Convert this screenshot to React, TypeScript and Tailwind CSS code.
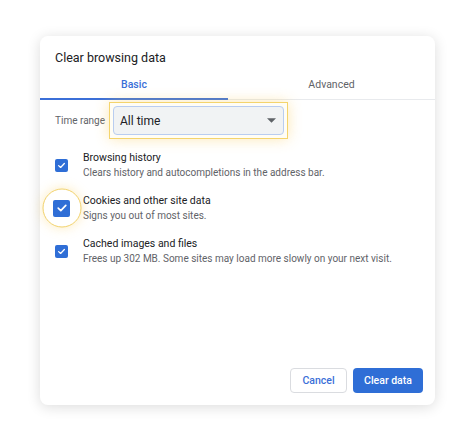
import React from 'react';

const items = [
  { title: 'Browsing history', sub: 'Clears history and autocompletions in the address bar.', focus: false },
  { title: 'Cookies and other site data', sub: 'Signs you out of most sites.', focus: true },
  { title: 'Cached images and files', sub: 'Frees up 302 MB. Some sites may load more slowly on your next visit.', focus: false },
];

const Check: React.FC<{ big?: boolean }> = ({ big }) => (
  <div
    className={`${big ? 'w-[17px] h-[17px]' : 'w-[13px] h-[13px]'} shrink-0 rounded-[2px] bg-[#2f6ed6] flex items-center justify-center relative z-10`}
  >
    <svg viewBox="0 0 12 12" className={big ? 'w-[12px] h-[12px]' : 'w-[9px] h-[9px]'}>
      <path d="M2.2 6.2 L4.8 8.6 L9.8 3.4" fill="none" stroke="white" strokeWidth="1.7" strokeLinecap="round" strokeLinejoin="round" />
    </svg>
  </div>
);

export default function App() {
  return (
    <div className="w-[474px] h-[443px] bg-white pt-[36px] pl-[40px] font-['Roboto',sans-serif]">
      <div className="w-[395px] h-[369px] rounded-lg bg-white shadow-[0_2px_14px_rgba(0,0,0,0.14)] flex flex-col">
        <div className="h-[42px] pt-[14px] px-[15px] text-[12.5px] leading-[15px] text-[#202124]">Clear browsing data</div>

        <div className="flex h-[22px] border-b border-[#e8eaed]">
          <div className="w-[188px] border-b-2 border-[#3b6fd8] -mb-px text-center text-[10.5px] leading-[12px] font-medium text-[#3b6fd8] pt-px">Basic</div>
          <div className="flex-1 text-center text-[10.5px] leading-[12px] text-[#5f6368] pt-px">Advanced</div>
        </div>

        <div className="flex items-center mt-[2px] pl-[15px]">
          <span className="w-[54px] text-[10px] text-[#5f6368]">Time range</span>
          <div className="p-[3px] border-[1.5px] border-[#f4d46c] bg-[#fffdf5] shadow-[0_0_14px_rgba(250,205,90,0.45)]">
            <div className="w-[171px] h-[29px] rounded-[4px] bg-[#f1f3f4] border border-[#b9cdf0] flex items-center justify-between pl-[6px] pr-[7px]">
              <span className="text-[12px] text-[#202124]">All time</span>
              <svg viewBox="0 0 10 5" className="w-[9px] h-[5px]">
                <path d="M0 0 L10 0 L5 5 Z" fill="#5f6368" />
              </svg>
            </div>
          </div>
        </div>

        <div className="flex flex-col gap-[13px] mt-[11px] pl-[15px]">
          {items.map(it => (
            <div key={it.title} className="flex items-center h-[30px]">
              <div className="w-[13px] flex justify-center relative">
                {it.focus && (
                  <div className="absolute left-1/2 top-1/2 -translate-x-1/2 -translate-y-1/2 w-[39px] h-[39px] rounded-full border-[1.5px] border-[#f2d36e] bg-white shadow-[0_0_12px_rgba(250,205,90,0.4)]" />
                )}
                <Check big={it.focus} />
              </div>
              <div className="ml-[15px] flex flex-col">
                <span className="text-[10.5px] leading-[15px] text-[#202124]">{it.title}</span>
                <span className="text-[10px] leading-[15px] text-[#5f6368]">{it.sub}</span>
              </div>
            </div>
          ))}
        </div>

        <div className="mt-auto flex justify-end gap-[6px] pr-[12px] pb-[12px]">
          <button className="w-[57px] h-[25px] rounded-[4px] border border-[#dadce0] bg-white text-[10.5px] font-medium text-[#3b6fd8]">Cancel</button>
          <button className="w-[70px] h-[25px] rounded-[4px] bg-[#2f6ed6] text-[10.5px] font-medium text-white">Clear data</button>
        </div>
      </div>
    </div>
  );
}
